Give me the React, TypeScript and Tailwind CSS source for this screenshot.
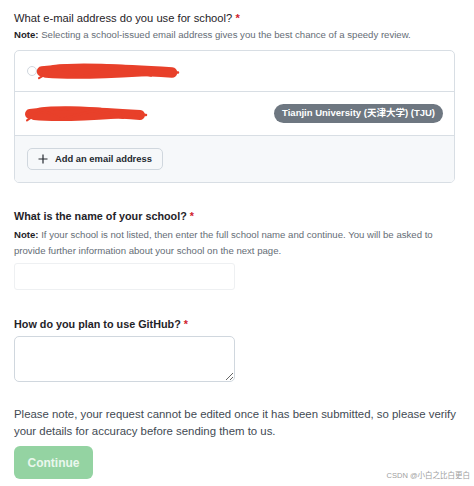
import React from "react"

function Scribble({ w, h, className }: { w: number; h: number; className?: string }) {
  // hand-drawn redaction strokes
  return (
    <svg width={w} height={h} viewBox={`0 0 ${w} ${h}`} className={className} fill="none">
      <g stroke="#e8402a" strokeLinecap="round" strokeLinejoin="round">
        <path d={`M6 ${h * 0.5} C ${w * 0.3} ${h * 0.3}, ${w * 0.6} ${h * 0.4}, ${w - 8} ${h * 0.55}`} strokeWidth={h * 0.5} />
        <path d={`M10 ${h * 0.62} C ${w * 0.35} ${h * 0.78}, ${w * 0.7} ${h * 0.55}, ${w - 16} ${h * 0.5}`} strokeWidth={h * 0.36} />
        <path d={`M${w * 0.12} ${h * 0.3} C ${w * 0.3} ${h * 0.15}, ${w * 0.5} ${h * 0.25}, ${w * 0.62} ${h * 0.3}`} strokeWidth={h * 0.22} />
        <path d={`M3 ${h * 0.82} L ${w * 0.15} ${h * 0.3} L ${w * 0.3} ${h * 0.75} L ${w * 0.55} ${h * 0.35} L ${w * 0.8} ${h * 0.7}`} strokeWidth={2} />
        <path d={`M${w * 0.7} ${h * 0.45} L ${w - 2} ${h * 0.55}`} strokeWidth={2.5} />
      </g>
    </svg>
  )
}

export default function App() {
  return (
    <div className="w-[474px] h-[486px] bg-white text-[#1f2328] font-['Liberation_Sans',_'Noto_Sans_CJK_SC',_sans-serif] relative overflow-hidden">
      <div className="pl-[14px] pr-[10px] pt-[10px]">
        {/* Email */}
        <h2 className="text-[11.2px] leading-[16px]">
          What e-mail address do you use for school? <span className="text-[#cf222e] font-bold">*</span>
        </h2>
        <p className="mt-[1px] text-[9.6px] leading-[16px] text-[#656d76]">
          <strong className="text-[#1f2328]">Note:</strong> Selecting a school-issued email address gives you the best chance of a speedy review.
        </p>
        <div className="mt-[7px] mr-[9px] border border-[#d8dee4] rounded-[5px] overflow-hidden">
          <div className="h-[41px] flex items-center pl-[12px] border-b border-[#d8dee4]">
            <span className="w-[10px] h-[10px] rounded-full border border-[#d0d7de] bg-white shrink-0" />
            <Scribble w={144} h={21} className="-ml-[1px]" />
          </div>
          <div className="h-[44px] flex items-center justify-between pl-[9px] pr-[11px] border-b border-[#d8dee4]">
            <Scribble w={124} h={20} />
            <span className="h-[19px] px-[8px] rounded-full bg-[#6e7781] text-white text-[9.5px] font-bold flex items-center">
              Tianjin University (天津大学) (TJU)
            </span>
          </div>
          <div className="h-[46px] bg-[#f6f8fa] flex items-center pl-[12px]">
            <button className="h-[22px] px-[10px] flex items-center gap-[7px] border border-[#d0d7de] rounded-[5px] bg-[#f6f8fa] text-[9.4px] font-bold text-[#24292f]">
              <svg width="10" height="10" viewBox="0 0 10 10" fill="none" stroke="#24292f" strokeWidth="1.2">
                <path d="M5 0.5V9.5M0.5 5H9.5" />
              </svg>
              Add an email address
            </button>
          </div>
        </div>

        {/* School name */}
        <h2 className="mt-[25px] text-[10.8px] leading-[16px] font-bold">
          What is the name of your school? <span className="text-[#cf222e]">*</span>
        </h2>
        <div className="mt-[3px] pr-[20px] text-[9.6px] leading-[16px] text-[#656d76]">
          <span className="font-bold text-[#1f2328]">Note: </span>
          If your school is not listed, then enter the full school name and continue. You will be asked to provide further information about your school on the next page.
        </div>
        <input className="mt-[4px] block w-[221px] h-[27px] border border-[#eef0f2] rounded-[3px] bg-white outline-none" />

        {/* GitHub usage */}
        <h2 className="mt-[26px] text-[10.8px] leading-[16px] font-bold">
          How do you plan to use GitHub? <span className="text-[#cf222e]">*</span>
        </h2>
        <textarea className="mt-[4px] block w-[221px] h-[46px] border border-[#d0d7de] rounded-[5px] bg-white outline-none resize" />

        <p className="mt-[24px] text-[11.4px] leading-[17px] text-[#424a53]">
          Please note, your request cannot be edited once it has been submitted, so please verify your details for accuracy before sending them to us.
        </p>
        <button className="mt-[6px] w-[79px] h-[33px] rounded-[6px] bg-[#94d3a2] text-[#eaf7ed] text-[12px] font-bold">
          Continue
        </button>
      </div>
      <span className="absolute right-[4px] bottom-[5px] text-[7.5px] text-[#a0a0a0]">CSDN @小白之比白更白</span>
    </div>
  )
}
